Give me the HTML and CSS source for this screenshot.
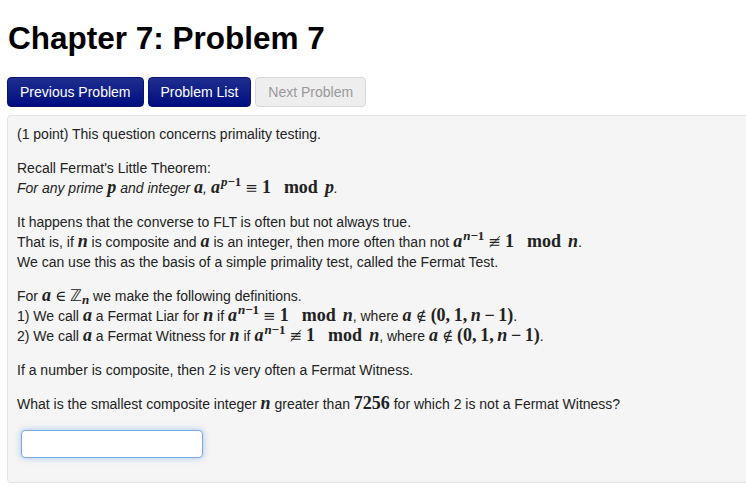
FILE: index.html
```html
<!DOCTYPE html>
<html lang="en">
<head>
    <meta charset="UTF-8">
    <title>Chapter 7: Problem 7</title>
    <link rel="stylesheet" href="styles.css">
</head>
<body>
  <div class="page">
    <h1 class="page-title">Chapter 7: Problem 7</h1>

    <div class="nav-row">
      <a class="nav-btn" href="#">Previous Problem</a>
      <a class="nav-btn" href="#">Problem List</a>
      <span class="nav-btn disabled">Next Problem</span>
    </div>

    <div class="problem">
      <p>(1 point) This question concerns primality testing.</p>

      <p>Recall Fermat's Little Theorem:<br>
      <em>For any prime <span class="mv">p</span> and integer <span class="mv">a</span>,
      <span class="m"><i>a</i><sup><i>p</i>&minus;1</sup><span class="op">&equiv;</span>1<span class="mod">mod</span><i>p</i></span>.</em></p>

      <p>It happens that the converse to FLT is often but not always true.<br>
      That is, if <span class="mv">n</span> is composite and <span class="mv">a</span> is an integer, then more often than not
      <span class="m"><i>a</i><sup><i>n</i>&minus;1</sup><span class="op">&#8802;</span>1<span class="mod">mod</span><i>n</i></span>.<br>
      We can use this as the basis of a simple primality test, called the Fermat Test.</p>

      <p>For <span class="m"><i>a</i><span class="op">&isin;</span><span class="bb">&#8484;</span><sub><i>n</i></sub></span> we make the following definitions.<br>
      1) We call <span class="mv">a</span> a Fermat Liar for <span class="mv">n</span> if
      <span class="m"><i>a</i><sup><i>n</i>&minus;1</sup><span class="op">&equiv;</span>1<span class="mod">mod</span><i>n</i></span>, where
      <span class="m"><i>a</i><span class="op">&notin;</span>(0,&#8201;1,&#8201;<i>n</i>&#8201;&minus;&#8201;1)</span>.<br>
      2) We call <span class="mv">a</span> a Fermat Witness for <span class="mv">n</span> if
      <span class="m"><i>a</i><sup><i>n</i>&minus;1</sup><span class="op">&#8802;</span>1<span class="mod">mod</span><i>n</i></span>, where
      <span class="m"><i>a</i><span class="op">&notin;</span>(0,&#8201;1,&#8201;<i>n</i>&#8201;&minus;&#8201;1)</span>.</p>

      <p>If a number is composite, then 2 is very often a Fermat Witness.</p>

      <p>What is the smallest composite integer <span class="mv">n</span> greater than <span class="m">7256</span> for which 2 is not a Fermat Witness?</p>

      <div class="answer-row">
        <input class="answer" type="text" autofocus>
      </div>
    </div>
  </div>
</body>
</html>
```

FILE: styles.css
```css
html {
  overflow: hidden;
}

body {
  margin: 0;
  background: #ffffff;
  font-family: "Liberation Sans", Arial, sans-serif;
  font-size: 14px;
  line-height: 20px;
  color: #333333;
}

.page {
  padding: 0 0 0 7px;
}

.page-title {
  margin: 0;
  padding: 18px 0 0 1px;
  font-size: 31.5px;
  line-height: 40px;
  font-weight: bold;
  color: #000000;
}

/* navigation buttons */
.nav-row {
  display: flex;
  gap: 4px;
  margin-top: 19px;
}

.nav-btn {
  display: inline-block;
  padding: 4px 12px;
  border: 1px solid #0a1470;
  border-radius: 4px;
  background: linear-gradient(#1f2e8f, #000d80);
  color: #ffffff;
  text-decoration: none;
  line-height: 20px;
}

.nav-btn.disabled {
  border-color: #d8d8d8;
  background: #eeeeee;
  color: #999999;
}

/* problem box */
.problem {
  width: 760px;
  margin-top: 8px;
  padding: 8px 9px 24px;
  border: 1px solid #e3e3e3;
  border-radius: 4px;
  background: #f5f5f5;
  box-sizing: border-box;
  color: #222222;
}

.problem p {
  margin: 0 0 14px;
}

.m, .mv {
  font-family: "Liberation Serif", "Times New Roman", serif;
  font-size: 18px;
  line-height: 10px;
  font-style: normal;
  font-weight: bold;
  white-space: nowrap;
}

.mv, .m i {
  font-style: italic;
}

.m sup, .m sub {
  font-size: 13px;
  line-height: 0;
}

.m sup {
  vertical-align: 7px;
  margin-left: 1px;
}

.m sub {
  vertical-align: -3px;
}

.op {
  font-family: "DejaVu Serif", serif;
  font-size: 15px;
  font-weight: normal;
  margin: 0 4px;
}

.mod {
  margin: 0 7px 0 13px;
}

.bb {
  font-weight: normal;
  font-family: "DejaVu Sans", sans-serif;
  font-size: 16px;
}

.answer-row {
  padding: 2px 4px 0;
}

.answer {
  display: block;
  width: 182px;
  height: 28px;
  box-sizing: border-box;
  padding: 4px 6px;
  border: 1px solid #7aa9e6;
  border-radius: 4px;
  background: #ffffff;
  box-shadow: 0 0 6px rgba(82, 150, 236, 0.5);
  font-family: "Liberation Sans", Arial, sans-serif;
  font-size: 14px;
  outline: none;
}
```
